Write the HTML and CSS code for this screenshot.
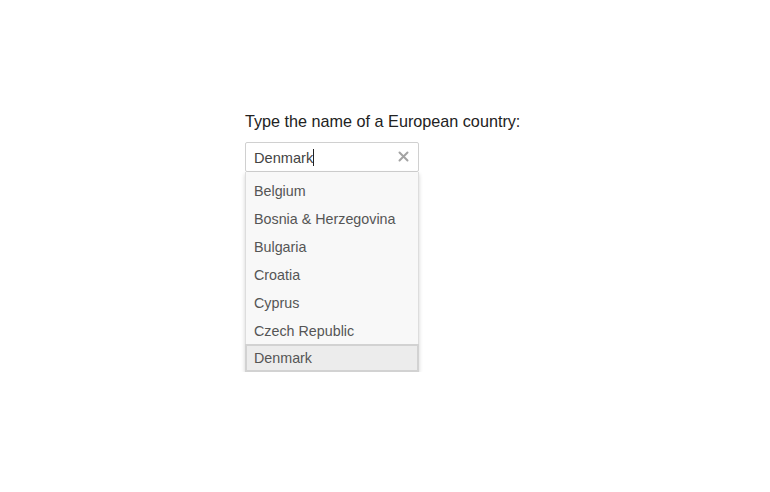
FILE: index.html
```html
<!DOCTYPE html>
<html>
<head>
<meta charset="utf-8">
<link rel="stylesheet" href="styles.css">
</head>
<body>
<div class="page">
  <label class="label" for="country">Type the name of a European country:</label>
  <div class="combo">
    <div class="input">
      <span class="value">Denmark</span><span class="caret"></span>
      <svg class="clear" width="11" height="11" viewBox="0 0 11 11"><path d="M1.5 1.5L9.5 9.5M9.5 1.5L1.5 9.5" stroke="#a3a3a3" stroke-width="2" stroke-linecap="round"/></svg>
    </div>
    <ul class="list">
      <li class="item">Belgium</li>
      <li class="item">Bosnia &amp; Herzegovina</li>
      <li class="item">Bulgaria</li>
      <li class="item">Croatia</li>
      <li class="item">Cyprus</li>
      <li class="item">Czech Republic</li>
      <li class="item selected">Denmark</li>
    </ul>
  </div>
</div>
</body>
</html>
```
FILE: styles.css
```css
html, body { margin: 0; padding: 0; background: #fff; }
body { font-family: "Liberation Sans", Arial, sans-serif; }
.page { padding: 111px 0 0 245px; }
.label { display: block; font-size: 16.2px; line-height: 20px; color: #222; margin-bottom: 11px; }
.combo { width: 174px; }
.input {
  box-sizing: border-box; height: 30px; border: 1px solid #d0d0d0; border-radius: 2px;
  display: flex; align-items: center; padding: 2px 8px 0; font-size: 14.6px; color: #444; background: #fff;
}
.value { line-height: 18px; }
.caret { width: 1px; height: 17px; background: #222; margin-top: -1px; }
.clear { margin-left: auto; margin-right: 1px; margin-top: -3px; }
.list {
  list-style: none; margin: 0; padding: 4px 0 0; background: #f8f8f8;
  border-left: 1px solid #ddd; border-right: 1px solid #ddd;
  box-shadow: 0 2px 4px rgba(0,0,0,0.18);
}
.item { box-sizing: border-box; height: 28px; line-height: 28px; padding: 1px 0 0 8px; font-size: 14.3px; color: #555; }
.item.selected { background: #ececec; border: 2px solid #d2d2d2; line-height: 23px; padding: 1px 0 0 7px; margin: 0 -1px; }
```
